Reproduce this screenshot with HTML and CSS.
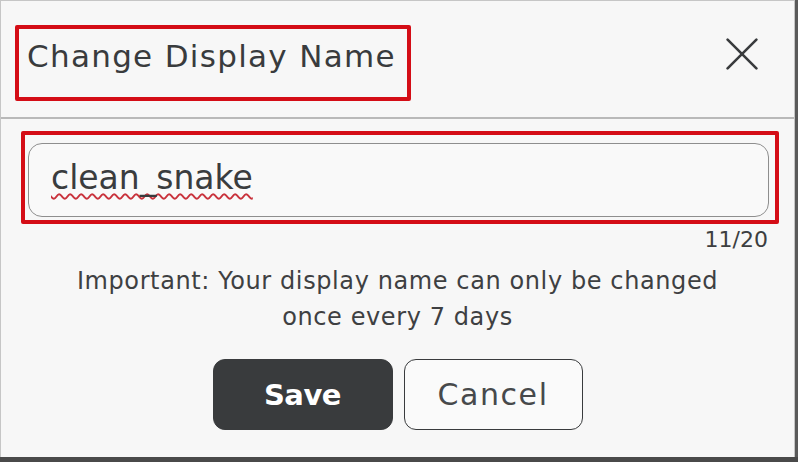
FILE: index.html
```html
<!DOCTYPE html>
<html lang="en">
<head>
<meta charset="utf-8">
<title>Change Display Name</title>
<link rel="stylesheet" href="styles.css">
</head>
<body>
<div class="screen">
  <div class="dialog">
    <div class="dialog-header">
      <div class="highlight title-box">
        <h1 class="title">Change Display Name</h1>
      </div>
      <button class="close" aria-label="Close">
        <svg width="32" height="32" viewBox="0 0 32 32"><path d="M1.6 1.6 L30.4 30.4 M30.4 1.6 L1.6 30.4" stroke="#393b3d" stroke-width="2.6" stroke-linecap="round" fill="none"/></svg>
      </button>
    </div>
    <div class="dialog-body">
      <div class="highlight input-box">
        <div class="name-input"><span class="misspelled">clean_snake</span></div>
      </div>
      <div class="counter">11/20</div>
      <p class="notice">Important: Your display name can only be changed once every 7 days</p>
      <div class="actions">
        <button class="btn btn-primary">Save</button>
        <button class="btn btn-secondary">Cancel</button>
      </div>
    </div>
  </div>
  <div class="side-strip"></div>
</div>
<div class="bottom-strip"></div>
</body>
</html>
```
FILE: styles.css
```css
* { box-sizing: border-box; }
html, body { margin: 0; padding: 0; }
body {
  width: 798px;
  height: 462px;
  overflow: hidden;
  background: #4e4e4e;
  font-family: "DejaVu Sans", "Noto Sans", sans-serif;
  color: #393b3d;
}
.screen { display: flex; height: 457px; }
.dialog {
  width: 795px;
  height: 457px;
  background: #f7f7f7;
  border: 1px solid #c6c6c6;
  border-bottom: none;
  display: flex;
  flex-direction: column;
}
.side-strip { flex: 1; background: #5a5a5a; }
.bottom-strip { height: 5px; background: #4a4a4a; }

.dialog-header {
  height: 118px;
  border-bottom: 2px solid #b9b9b9;
  display: flex;
  justify-content: space-between;
  align-items: flex-start;
  padding: 24px 36px 0 14px;
}
.highlight { border: 4px solid #d40d16; border-radius: 2px; }
.title-box {
  width: 396px;
  height: 76px;
  padding: 9px 0 0 8px;
}
.title {
  margin: 0;
  font-size: 31px;
  font-weight: 400;
  line-height: 36px;
  letter-spacing: 1.3px;
  color: #393b3d;
  white-space: nowrap;
}
.close {
  margin-top: 13px;
  padding: 0;
  border: 0;
  background: none;
  width: 32px;
  height: 32px;
  display: block;
}
.close svg { display: block; }

.dialog-body { padding: 12px 0 0 20px; }
.input-box {
  width: 758px;
  height: 93px;
  padding: 8px 0 0 3px;
}
.name-input {
  width: 741px;
  height: 74px;
  border: 1px solid #8e8e8e;
  border-radius: 14px;
  background: #f9f9f9;
  padding: 0 0 4px 22px;
  font-size: 33px;
  line-height: 68px;
  color: #3a3c3e;
}
.misspelled {
  text-decoration: underline wavy #c9323c;
  text-decoration-thickness: 1.5px;
  text-underline-offset: 4px;
}
.counter {
  margin-top: 3px;
  padding-right: 26px;
  text-align: right;
  font-size: 22px;
  line-height: 26px;
  color: #3c3e40;
  width: 773px;
}
.notice {
  margin: 10px auto 0 -20px;
  width: 793px;
  padding: 0 56px;
  text-align: center;
  font-size: 24px;
  line-height: 36px;
  letter-spacing: 0.6px;
  color: #3e4042;
}
.actions {
  margin: 24px 0 0 -20px;
  width: 793px;
  display: flex;
  justify-content: center;
  gap: 11px;
}
.btn {
  height: 71px;
  border-radius: 12px;
  font-family: "DejaVu Sans", "Noto Sans", sans-serif;
  display: flex;
  align-items: center;
  justify-content: center;
  padding: 0;
}
.btn-primary {
  width: 180px;
  background: #393b3d;
  border: 1px solid #393b3d;
  color: #ffffff;
  font-size: 29px;
  font-weight: 700;
  letter-spacing: -0.5px;
}
.btn-secondary {
  width: 179px;
  background: #fafafa;
  border: 1.5px solid #393b3d;
  color: #47494b;
  font-size: 30px;
  font-weight: 400;
  letter-spacing: 1.6px;
}
```
